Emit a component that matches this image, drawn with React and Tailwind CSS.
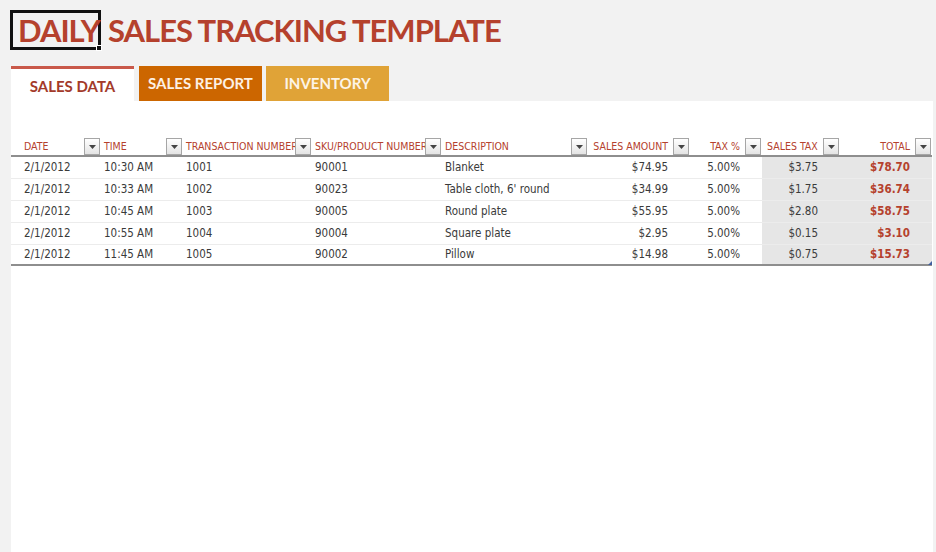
import React from "react";

const cols = [
  { key: "date", label: "DATE", w: 90, align: "left", pl: 13 },
  { key: "time", label: "TIME", w: 82, align: "left", pl: 3 },
  { key: "txn", label: "TRANSACTION NUMBER", w: 129, align: "left", pl: 3 },
  { key: "sku", label: "SKU/PRODUCT NUMBER", w: 130, align: "left", pl: 3 },
  { key: "desc", label: "DESCRIPTION", w: 146, align: "left", pl: 3 },
  { key: "amount", label: "SALES AMOUNT", w: 102, align: "right", pl: 3 },
  { key: "taxPct", label: "TAX %", w: 72, align: "right", pl: 3 },
  { key: "tax", label: "SALES TAX", w: 78, align: "right", pl: 5, headLeft: true, shaded: true },
  { key: "total", label: "TOTAL", w: 92, align: "right", pl: 3, bold: true, shaded: true },
];

const rows = [
  { date: "2/1/2012", time: "10:30 AM", txn: "1001", sku: "90001", desc: "Blanket", amount: "$74.95", taxPct: "5.00%", tax: "$3.75", total: "$78.70" },
  { date: "2/1/2012", time: "10:33 AM", txn: "1002", sku: "90023", desc: "Table cloth, 6' round", amount: "$34.99", taxPct: "5.00%", tax: "$1.75", total: "$36.74" },
  { date: "2/1/2012", time: "10:45 AM", txn: "1003", sku: "90005", desc: "Round plate", amount: "$55.95", taxPct: "5.00%", tax: "$2.80", total: "$58.75" },
  { date: "2/1/2012", time: "10:55 AM", txn: "1004", sku: "90004", desc: "Square plate", amount: "$2.95", taxPct: "5.00%", tax: "$0.15", total: "$3.10" },
  { date: "2/1/2012", time: "11:45 AM", txn: "1005", sku: "90002", desc: "Pillow", amount: "$14.98", taxPct: "5.00%", tax: "$0.75", total: "$15.73" },
];

const FilterButton = () => (
  <div className="shrink-0 w-[16px] h-[17px] mr-[1px] border border-[#a6a6a6] bg-gradient-to-b from-white to-[#e4e4e4] flex items-center justify-center">
    <svg width="7" height="4" viewBox="0 0 7 4">
      <path d="M0 0 L7 0 L3.5 4 Z" fill="#444" />
    </svg>
  </div>
);

const App = () => {
  return (
    <div className="min-h-screen h-[552px] bg-[#f2f2f2] flex flex-col overflow-hidden">
      {/* Title */}
      <div className="pt-[10px] pl-[10px] flex items-start h-[66px] font-['Lato',sans-serif] font-bold text-[#b5412d] text-[31px] tracking-[-1px] leading-none">
        <div className="relative border-[3px] border-[#111] h-[40px] w-[91px] pl-[5px] flex items-center">
          <span>DAILY</span>
          <div className="absolute -right-[4px] -bottom-[4px] w-[6px] h-[6px] bg-[#111] border border-white" />
        </div>
        <div className="h-[40px] flex items-center pl-[7px]">SALES TRACKING TEMPLATE</div>
      </div>

      {/* Tabs */}
      <div className="flex items-end pl-[11px] font-['Lato',sans-serif] font-bold text-[15px]">
        <div className="w-[123px] h-[35px] bg-white border-t-[3px] border-[#c9594a] text-[#a33a2a] flex items-center justify-center pt-[2px]">
          SALES DATA
        </div>
        <div className="ml-[5px] w-[123px] h-[35px] bg-[#cc6600] text-[#fdf1e4] flex items-center justify-center">
          SALES REPORT
        </div>
        <div className="ml-[4px] w-[123px] h-[35px] bg-[#e0a337] text-[#fdf4e6] flex items-center justify-center">
          INVENTORY
        </div>
      </div>

      {/* Sheet panel */}
      <div className="ml-[11px] w-[922px] flex-1 bg-white pt-[37px] font-['DejaVu_Sans_Condensed','DejaVu_Sans',sans-serif]">
        <div className="w-[921px] relative">
          {/* Header */}
          <div className="flex h-[19px] border-b-2 border-[#8e8e8e] text-[10.5px] text-[#b5412d]">
            {cols.map((c) => (
              <div key={c.key} style={{ width: c.w }} className="flex items-start shrink-0">
                <div
                  className={
                    "flex-1 overflow-hidden whitespace-nowrap leading-[17px] " +
                    (c.align === "right" && !c.headLeft ? "text-right pr-[5px]" : "")
                  }
                  style={{ paddingLeft: c.pl }}
                >
                  {c.label}
                </div>
                <FilterButton />
              </div>
            ))}
          </div>

          {/* Rows */}
          {rows.map((r, i) => (
            <div
              key={i}
              className={
                "flex text-[11.5px] text-[#3a3a3a] " +
                (i === rows.length - 1 ? "h-[21px] border-b-2 border-[#8e8e8e]" : "h-[22px] border-b border-[#ececec]")
              }
            >
              {cols.map((c) => (
                <div
                  key={c.key}
                  style={{ width: c.w, paddingLeft: c.align === "left" ? c.pl : 0 }}
                  className={
                    "shrink-0 flex items-center whitespace-nowrap " +
                    (c.align === "right" ? "justify-end pr-[22px] " : "") +
                    (c.shaded ? "bg-[#e6e6e6] " : "") +
                    (c.bold ? "font-bold text-[#b5412d]" : "")
                  }
                >
                  {r[c.key]}
                </div>
              ))}
            </div>
          ))}

          {/* resize handle */}
          <div className="absolute right-[0px] bottom-[1px] w-0 h-0 border-l-[4px] border-l-transparent border-b-[4px] border-b-[#3f5f9f]" />
        </div>
      </div>
    </div>
  );
};

export default App;
